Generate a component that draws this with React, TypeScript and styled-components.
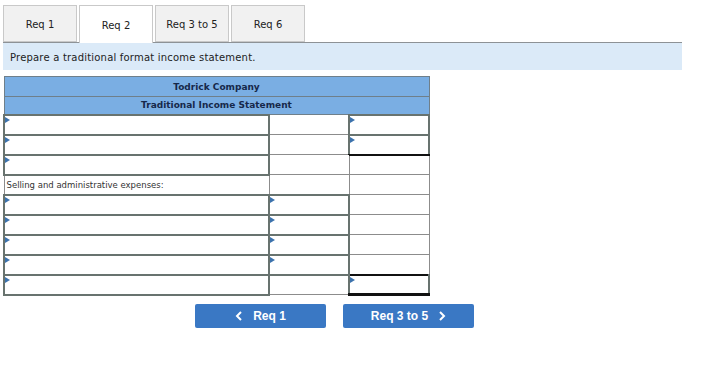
import { createGlobalStyle } from "styled-components";
import styled from "styled-components";

const Global = createGlobalStyle`
  body {
    margin: 0;
    background: #fff;
    font-family: "DejaVu Sans", Verdana, sans-serif;
  }
`;

const Page = styled.div`
  width: 720px;
  height: 382px;
  padding: 5px 0 0 3px;
  box-sizing: border-box;
`;

const TabBar = styled.div`
  display: flex;
  gap: 2px;
  width: 679px;
  border-bottom: 1px solid #8d9296;
  height: 38px;
  box-sizing: border-box;
`;

const Tab = styled.div<{ $active?: boolean }>`
  width: 74px;
  height: ${(p) => (p.$active ? "38px" : "37px")};
  box-sizing: border-box;
  border: 1px solid #c9c9c9;
  border-bottom: ${(p) => (p.$active ? "none" : "1px solid #c9c9c9")};
  background: ${(p) => (p.$active ? "#fff" : "#f1f1f1")};
  display: flex;
  align-items: center;
  justify-content: center;
  padding-top: 2px;
  font-size: 10px;
  color: #222;
  position: relative;
  z-index: 1;
`;

const Prompt = styled.div`
  width: 679px;
  height: 27px;
  background: #dbeaf8;
  display: flex;
  align-items: center;
  padding: 1px 0 0 7px;
  box-sizing: border-box;
  font-size: 10px;
  letter-spacing: 0.2px;
  color: #222;
`;

const Sheet = styled.table`
  margin-top: 6px;
  border-collapse: collapse;
  width: 425px;
  table-layout: fixed;
`;

const Row = styled.tr<{ $h: number }>`
  height: ${(p) => p.$h}px;
`;

const HeadCell = styled.th`
  padding: 0;
  background: #7aaee3;
  border: 1px solid #6f7f8a;
  font-size: 9px;
  font-weight: bold;
  color: #16284a;
  text-align: center;
`;

const Cell = styled.td<{ $input?: boolean; $under?: "single" | "double" }>`
  padding: 0 0 0 2px;
  position: relative;
  border: ${(p) => (p.$input ? "2px solid #68736f" : "1px solid #8c8c8c")};
  ${(p) => p.$under === "single" && "border-bottom: 2px solid #111;"}
  ${(p) =>
    p.$under === "double" &&
    "border-top: 2px solid #111; border-bottom: 3px solid #111;"}
  background: #fff;
  font-size: 8.5px;
  color: #333;
  vertical-align: middle;
`;

const Marker = styled.span`
  position: absolute;
  top: 1px;
  left: 0;
  width: 0;
  height: 0;
  border-top: 3px solid transparent;
  border-bottom: 3px solid transparent;
  border-left: 5px solid #3d73ad;
`;

const Nav = styled.div`
  display: flex;
  gap: 17px;
  margin: 8px 0 0 192px;
`;

const NavButton = styled.button`
  width: 131px;
  height: 24px;
  border: none;
  border-radius: 2px;
  background: #3a78c4;
  color: #fff;
  font-family: "Liberation Sans", Arial, sans-serif;
  font-weight: bold;
  font-size: 12px;
  display: flex;
  align-items: center;
  justify-content: center;
  gap: 10px;
  padding: 0;
`;

const Chevron = styled.svg`
  width: 8px;
  height: 10px;
`;

type Kind = { input?: boolean; under?: "single" | "double"; text?: string };

const rows: Kind[][] = [
  [{ input: true }, {}, { input: true }],
  [{ input: true }, {}, { input: true, under: "single" }],
  [{ input: true }, {}, {}],
  [{ text: "Selling and administrative expenses:" }, {}, {}],
  [{ input: true }, { input: true }, {}],
  [{ input: true }, { input: true }, {}],
  [{ input: true }, { input: true }, {}],
  [{ input: true }, { input: true }, {}],
  [{ input: true }, {}, { input: true, under: "double" }],
];

function Left() {
  return (
    <Chevron viewBox="0 0 8 10">
      <path d="M6 1 L2 5 L6 9" fill="none" stroke="#fff" strokeWidth="2" />
    </Chevron>
  );
}

function Right() {
  return (
    <Chevron viewBox="0 0 8 10">
      <path d="M2 1 L6 5 L2 9" fill="none" stroke="#fff" strokeWidth="2" />
    </Chevron>
  );
}

export default function App() {
  return (
    <>
      <Global />
      <Page>
        <TabBar>
          <Tab>Req 1</Tab>
          <Tab $active>Req 2</Tab>
          <Tab>Req 3 to 5</Tab>
          <Tab>Req 6</Tab>
        </TabBar>
        <Prompt>Prepare a traditional format income statement.</Prompt>
        <Sheet>
          <colgroup>
            <col style={{ width: 265 }} />
            <col style={{ width: 80 }} />
            <col style={{ width: 80 }} />
          </colgroup>
          <thead>
            <Row $h={20}>
              <HeadCell colSpan={3}>Todrick Company</HeadCell>
            </Row>
            <Row $h={18}>
              <HeadCell colSpan={3}>Traditional Income Statement</HeadCell>
            </Row>
          </thead>
          <tbody>
            {rows.map((row, i) => (
              <Row $h={20} key={i}>
                {row.map((c, j) => (
                  <Cell key={j} $input={c.input} $under={c.under}>
                    {c.input && <Marker />}
                    {c.text}
                  </Cell>
                ))}
              </Row>
            ))}
          </tbody>
        </Sheet>
        <Nav>
          <NavButton>
            <Left />
            Req 1
          </NavButton>
          <NavButton>
            Req 3 to 5
            <Right />
          </NavButton>
        </Nav>
      </Page>
    </>
  );
}
